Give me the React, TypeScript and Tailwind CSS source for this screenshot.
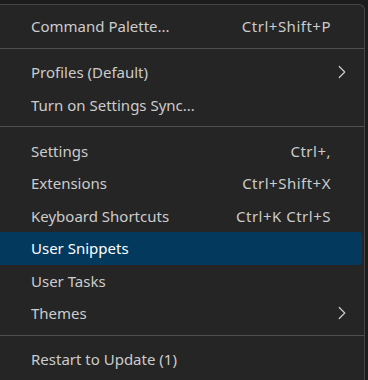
import { ChevronRight } from "lucide-react";

type Item =
  | { kind: "sep" }
  | { kind: "item"; label: string; keys?: string; sub?: boolean; active?: boolean };

const ITEMS: Item[] = [
  { kind: "item", label: "Command Palette...", keys: "Ctrl+Shift+P" },
  { kind: "sep" },
  { kind: "item", label: "Profiles (Default)", sub: true },
  { kind: "item", label: "Turn on Settings Sync..." },
  { kind: "sep" },
  { kind: "item", label: "Settings", keys: "Ctrl+," },
  { kind: "item", label: "Extensions", keys: "Ctrl+Shift+X" },
  { kind: "item", label: "Keyboard Shortcuts", keys: "Ctrl+K Ctrl+S" },
  { kind: "item", label: "User Snippets", active: true },
  { kind: "item", label: "User Tasks" },
  { kind: "item", label: "Themes", sub: true },
  { kind: "sep" },
  { kind: "item", label: "Restart to Update (1)" },
];

export default function App() {
  return (
    <div
      className="h-[380px] w-[368px] overflow-hidden bg-[#1c1c1c] pt-[4px] text-[15px] text-[#cccccc]"
      style={{ fontFamily: '"Noto Sans", "Open Sans", sans-serif' }}
    >
      <div className="h-full w-[365px] rounded-tr-[6px] border-r border-t border-[#454545] bg-[#252526] pt-[5px]">
        {ITEMS.map((it, i) =>
          it.kind === "sep" ? (
            <div key={i} className="pb-[7.5px] pt-[5px]">
              <div className="h-px bg-[#505050]" />
            </div>
          ) : (
            <div
              key={i}
              className={
                "mr-[2px] flex h-[32.5px] items-center rounded-r-[3px] pl-[31px] " +
                (it.active ? "bg-[#04395e] text-white" : "")
              }
            >
              <span className="flex-1 whitespace-nowrap">{it.label}</span>
              {it.keys && <span className="whitespace-nowrap tracking-[0.5px]">{it.keys}</span>}
              <span className="flex w-[31px] items-center">
                {it.sub && <ChevronRight size={22} strokeWidth={1.3} />}
              </span>
            </div>
          ),
        )}
      </div>
    </div>
  );
}
